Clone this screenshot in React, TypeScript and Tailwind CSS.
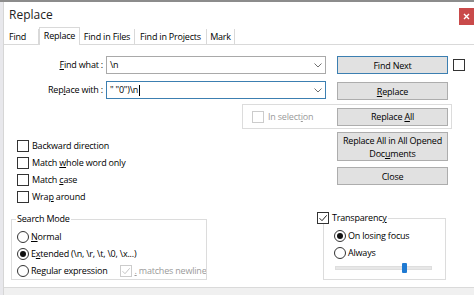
import React from "react";

const font = { fontFamily: '"Open Sans", "Noto Sans", sans-serif' };

function U({ children }: { children: React.ReactNode }) {
  return <span className="underline underline-offset-[1px]">{children}</span>;
}

function Check({ checked, disabled }: { checked?: boolean; disabled?: boolean }) {
  return (
    <span
      className={`flex items-center justify-center w-[12px] h-[12px] shrink-0 border bg-white ${
        disabled ? "border-[#cccccc]" : "border-[#333333]"
      }`}
    >
      {checked && (
        <svg width="10" height="10" viewBox="0 0 10 10">
          <path
            d="M1.5 5.2 L4 7.7 L8.7 2.3"
            fill="none"
            stroke={disabled ? "#c4c4c4" : "#222"}
            strokeWidth="1"
          />
        </svg>
      )}
    </span>
  );
}

function Radio({ on }: { on?: boolean }) {
  return (
    <span className="flex items-center justify-center w-[12px] h-[12px] shrink-0 rounded-full border border-[#333333] bg-white">
      {on && <span className="w-[6px] h-[6px] rounded-full bg-[#111111]" />}
    </span>
  );
}

function Chevron() {
  return (
    <svg width="8" height="5" viewBox="0 0 8 5" className="mr-[3px]">
      <path d="M0.5 0.5 L4 4 L7.5 0.5" fill="none" stroke="#707070" strokeWidth="1" />
    </svg>
  );
}

function Btn({
  children,
  focus,
  className = "h-[18px]",
}: {
  children: React.ReactNode;
  focus?: boolean;
  className?: string;
}) {
  return (
    <div
      className={`w-[111px] shrink-0 flex items-center justify-center text-center leading-[13px] bg-[#e1e1e1] border ${
        focus ? "border-[#3c7fb1]" : "border-[#adadad]"
      } ${className}`}
    >
      <span>{children}</span>
    </div>
  );
}

export default function App() {
  return (
    <div
      className="w-[474px] h-[295px] overflow-hidden bg-[#e8e8ec] flex flex-col text-[9px] tracking-[-0.2px] text-black whitespace-nowrap"
      style={font}
    >
      {/* window frame top */}
      <div className="h-[2px] bg-[#8c8c8c] shrink-0" />

      <div className="flex-1 ml-[3px] border-l border-[#d6d6d6] bg-white flex flex-col">
        {/* title bar */}
        <div className="h-[26px] flex justify-between shrink-0">
          <span className="pl-[5px] pt-[5px] text-[12px] tracking-normal leading-[16px] text-[#222]">Replace</span>
          <div className="mt-[6px] w-[15px] h-[17px] bg-[#c94a4a] flex items-center justify-center">
            <svg width="7" height="7" viewBox="0 0 7 7">
              <path d="M1 1 L6 6 M6 1 L1 6" stroke="#fff" strokeWidth="1.4" />
            </svg>
          </div>
        </div>

        {/* tabs */}
        <div className="h-[17px] flex items-end border-b border-[#d9d9d9] shrink-0">
          <div className="h-[15px] w-[35px] flex items-center pl-[5px] border-r border-[#d9d9d9]">Find</div>
          <div className="h-[18px] w-[41px] -mb-[1px] flex items-center justify-center pb-[2px] bg-white border-x border-t border-[#d9d9d9]">
            Replace
          </div>
          <div className="h-[15px] w-[55px] flex items-center justify-center border-r border-[#d9d9d9]">
            Find in Files
          </div>
          <div className="h-[15px] w-[72px] flex items-center justify-center border-r border-[#d9d9d9]">
            Find in Projects
          </div>
          <div className="h-[15px] w-[28px] flex items-center justify-center border-r border-[#d9d9d9]">Mark</div>
        </div>

        {/* body */}
        <div className="flex-1 flex flex-col">
          <div className="pt-[11px] flex items-center h-[29px] shrink-0">
            <span className="w-[99px] text-right">
              <U>F</U>ind what :
            </span>
            <div className="ml-[3px] w-[220px] h-[18px] border border-[#a9a9a9] flex items-center justify-between pl-[3px]">
              <span>\n</span>
              <Chevron />
            </div>
            <Btn focus className="h-[18px] ml-[11px]">
              Find Next
            </Btn>
            <div className="ml-[5px]">
              <Check />
            </div>
          </div>

          <div className="mt-[7px] flex items-center h-[18px] shrink-0">
            <span className="w-[99px] text-right">
              Rep<U>l</U>ace with :
            </span>
            <div className="ml-[3px] w-[220px] h-[18px] border border-[#3c7fb1] flex items-center justify-between pl-[3px]">
              <span className="flex items-center">
                " "0")\n<span className="w-px h-[11px] bg-black ml-px" />
              </span>
              <Chevron />
            </div>
            <Btn className="h-[18px] ml-[11px] mt-[2px]">
              <U>R</U>eplace
            </Btn>
          </div>

          <div className="mt-[5px] ml-[238px] w-[210px] h-[25px] border border-[#dcdcdc] flex items-center justify-between pl-[9px] pr-[3px] shrink-0">
            <div className="flex items-center gap-[4px] text-[#9a9a9a]">
              <Check disabled />
              <span>
                In select<U>i</U>on
              </span>
            </div>
            <Btn>
              Replace <U>A</U>ll
            </Btn>
          </div>

          <div className="mt-[3px] flex shrink-0">
            <div className="w-[333px] pt-[5px] pl-[13px] flex flex-col">
              <div className="h-[17px] flex items-center gap-[3px]">
                <Check />
                <span>Backward direction</span>
              </div>
              <div className="h-[17px] flex items-center gap-[3px]">
                <Check />
                <span>
                  Match <U>w</U>hole word only
                </span>
              </div>
              <div className="h-[17px] flex items-center gap-[3px]">
                <Check />
                <span>
                  Match <U>c</U>ase
                </span>
              </div>
              <div className="h-[17px] flex items-center gap-[3px]">
                <Check />
                <span>
                  Wra<U>p</U> around
                </span>
              </div>
            </div>
            <div className="flex flex-col gap-[6px]">
              <Btn className="h-[29px] px-[2px] whitespace-normal">
                Replace All in All Opened Doc<U>u</U>ments
              </Btn>
              <Btn>Close</Btn>
            </div>
          </div>

          {/* lower groups */}
          <div className="flex items-start shrink-0">
            <fieldset className="mt-[8px] ml-[7px] w-[196px] min-w-0 h-[67px] border border-[#dcdcdc] pl-[5px] overflow-hidden">
              <legend className="h-[12px] leading-[12px] px-[1px] -ml-[1px]">Search Mode</legend>
              <div className="mt-[3px] h-[17px] flex items-center gap-[2px]">
                <Radio />
                <span>
                  <U>N</U>ormal
                </span>
              </div>
              <div className="h-[17px] flex items-center gap-[2px]">
                <Radio on />
                <span>
                  E<U>x</U>tended (\n, \r, \t, \0, \x...)
                </span>
              </div>
              <div className="h-[17px] flex items-center gap-[2px]">
                <Radio />
                <span>Regular expression</span>
                <span className="ml-[10px] flex items-center gap-[3px] text-[#9a9a9a]">
                  <Check checked disabled />
                  <span>
                    <U>.</U> matches newline
                  </span>
                </span>
              </div>
            </fieldset>

            <fieldset className="mt-[7px] ml-[116px] w-[123px] min-w-0 h-[68px] border border-[#dcdcdc] pl-[10px]">
              <legend className="h-[12px] -ml-[17px] pr-[1px] flex items-center gap-[3px] leading-[12px] bg-white">
                <Check checked />
                <span>
                  Transparenc<U>y</U>
                </span>
              </legend>
              <div className="mt-[3px] h-[17px] flex items-center gap-[2px]">
                <Radio on />
                <span>On losing focus</span>
              </div>
              <div className="h-[17px] flex items-center gap-[2px]">
                <Radio />
                <span>Always</span>
              </div>
              <div className="mt-[2px] ml-[1px] w-[97px] h-[10px] relative flex items-center">
                <div className="w-full h-[4px] bg-[#e7e7e7] border border-[#dedede]" />
                <div className="absolute left-[67px] top-0 w-[5px] h-[10px] bg-[#1f7ad2] rounded-[1px]" />
              </div>
            </fieldset>
          </div>

          <div className="mt-[7px] flex-1 border-t border-[#dadada] bg-[#f0f0f0]" />
        </div>
      </div>
    </div>
  );
}
